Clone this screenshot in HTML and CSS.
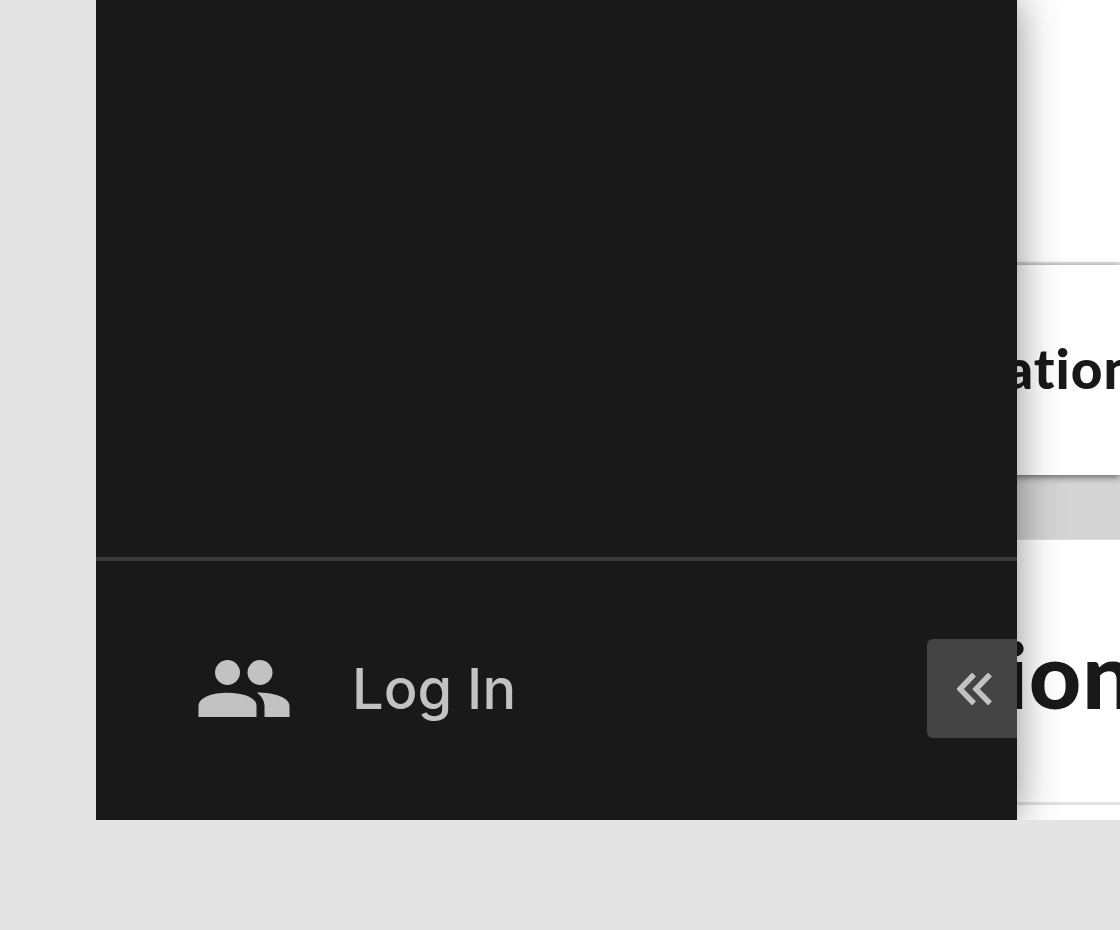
FILE: index.html
```html
<!DOCTYPE html>
<html lang="en">
<head>
<meta charset="utf-8">
<title>Log In</title>
<link rel="stylesheet" href="styles.css">
</head>
<body>
<div class="frame">
  <main class="content">
    <div class="row row-top"></div>
    <div class="row row-nav"><span class="nav-text">ation</span></div>
    <div class="band"></div>
    <div class="row row-title"><h1 class="title">ion</h1></div>
    <div class="row row-end"></div>
  </main>
  <aside class="sidebar">
    <div class="side-body"></div>
    <div class="side-footer">
      <svg class="people" viewBox="0 0 92 60" aria-hidden="true">
        <circle cx="29.500" cy="13.500" r="12.500"/>
        <circle cx="62" cy="13.500" r="12.500"/>
        <path d="M0.500 58V47C0.500 38 15 33.700 29.500 33.700S58.500 38 58.500 47V58Z"/>
        <path d="M59 33.500C75 33.500 91.500 38 91.500 47V58H66.500V47C66.500 42 63.500 37 59 33.500Z"/>
      </svg>
      <span class="login">Log In</span>
      <button class="collapse" type="button" aria-label="Collapse">
        <svg viewBox="0 0 36 32" aria-hidden="true">
          <path d="M17 1.500 3 16l14 14.500M33 1.500 19 16l14 14.500"/>
        </svg>
      </button>
    </div>
  </aside>
</div>
</body>
</html>
```

FILE: styles.css
```css
* { box-sizing: border-box; }

html, body {
  margin: 0;
  height: 100%;
  background: #e4e4e4;
}

body {
  font-family: "Inter", "Liberation Sans", sans-serif;
  overflow: hidden;
}

.frame {
  position: relative;
  margin-left: 96px;
  width: 1024px;
  height: 820px;
  overflow: hidden;
}

.content {
  display: flex;
  flex-direction: column;
  height: 100%;
  background: #fff;
}

.row {
  background: #fff;
  white-space: nowrap;
}

.row-top {
  height: 265px;
  flex: none;
  border-bottom: 3px solid #e0e0e0;
}

.row-nav {
  height: 210px;
  flex: none;
  display: flex;
  align-items: center;
  padding-left: 909px;
  padding-bottom: 3px;
  position: relative;
  box-shadow: 0 2px 7px rgba(0, 0, 0, 0.55);
}

.nav-text {
  font-family: "Lato", sans-serif;
  font-weight: 900;
  font-size: 55px;
  letter-spacing: 1px;
  line-height: 1;
  color: #191919;
}

.band {
  height: 65px;
  flex: none;
  background: #d4d4d4;
  border-bottom: 1px solid #dedede;
}

.row-title {
  height: 265px;
  flex: none;
  display: flex;
  align-items: center;
  padding-left: 908px;
  padding-top: 5px;
  border-bottom: 3px solid #e0e0e0;
}

.title {
  margin: 0;
  font-family: "Lato", sans-serif;
  font-size: 91px;
  font-weight: 900;
  letter-spacing: 1px;
  line-height: 1;
  color: #191919;
}

.row-end {
  flex: 1;
}

.sidebar {
  position: absolute;
  left: 0;
  top: 0;
  width: 921px;
  height: 100%;
  display: flex;
  flex-direction: column;
  background: #191919;
  box-shadow: 0 0 40px rgba(0, 0, 0, 0.45);
}

.side-body {
  flex: 1;
}

.side-footer {
  position: relative;
  height: 263px;
  flex: none;
  display: flex;
  align-items: center;
  gap: 62px;
  padding-left: 102px;
  padding-bottom: 3px;
  border-top: 4px solid #3a3a3a;
}

.people {
  width: 92px;
  height: 60px;
  fill: #c2c2c2;
  flex: none;
}

.login {
  font-size: 56px;
  font-weight: 500;
  line-height: 1;
  color: #c2c2c2;
}

.collapse {
  position: absolute;
  right: 0;
  top: 78px;
  width: 90px;
  height: 99px;
  padding: 0 0 0 30px;
  display: flex;
  align-items: center;
  border: 0;
  border-radius: 6px 0 0 6px;
  background: #444;
}

.collapse svg {
  width: 36px;
  height: 32px;
  fill: none;
  stroke: #c2c2c2;
  stroke-width: 5.500;
}
```
